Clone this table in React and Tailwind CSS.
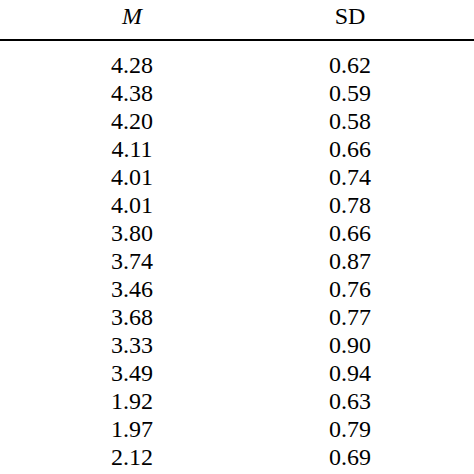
import React from "react";

const rows = [
  ["4.28", "0.62"],
  ["4.38", "0.59"],
  ["4.20", "0.58"],
  ["4.11", "0.66"],
  ["4.01", "0.74"],
  ["4.01", "0.78"],
  ["3.80", "0.66"],
  ["3.74", "0.87"],
  ["3.46", "0.76"],
  ["3.68", "0.77"],
  ["3.33", "0.90"],
  ["3.49", "0.94"],
  ["1.92", "0.63"],
  ["1.97", "0.79"],
  ["2.12", "0.69"],
];

export default function App() {
  return (
    <div
      className="w-[474px] h-[474px] overflow-hidden bg-white text-black text-[24px] leading-[28px]"
      style={{ fontFamily: '"Liberation Serif", "Times New Roman", serif' }}
    >
      <div className="flex pt-[2px] pb-[9px] border-b-2 border-black">
        <div className="w-[264px] text-center italic">M</div>
        <div className="w-[172px] text-center">SD</div>
      </div>
      <div className="pt-[10px] flex flex-col">
        {rows.map(([m, sd], i) => (
          <div key={i} className="flex h-[28px]">
            <div className="w-[264px] text-center">{m}</div>
            <div className="w-[172px] text-center">{sd}</div>
          </div>
        ))}
      </div>
    </div>
  );
}
